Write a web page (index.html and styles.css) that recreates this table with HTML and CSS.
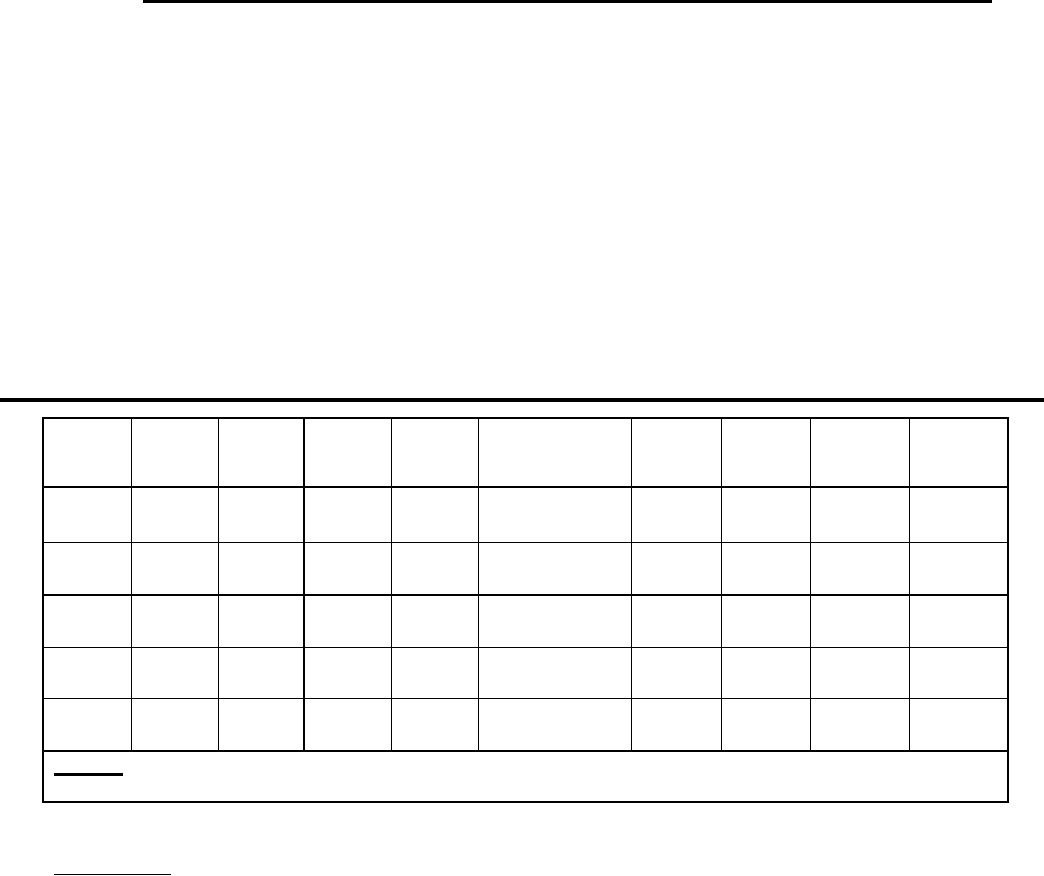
FILE: index.html
```html
<!DOCTYPE html>
<html lang="en">
<head>
<meta charset="utf-8">
<title>Document</title>
<link rel="stylesheet" href="styles.css">
</head>
<body>
<div class="page">
  <div class="top-rule"></div>
  <div class="section-rule"></div>
  <div class="grid-table">
    <div class="cell hdr"></div><div class="cell hdr"></div><div class="cell hdr thick-r"></div><div class="cell hdr"></div><div class="cell hdr"></div><div class="cell hdr"></div><div class="cell hdr"></div><div class="cell hdr"></div><div class="cell hdr"></div><div class="cell hdr thick-r"></div>
    <div class="cell"></div><div class="cell"></div><div class="cell thick-r"></div><div class="cell"></div><div class="cell"></div><div class="cell"></div><div class="cell"></div><div class="cell"></div><div class="cell"></div><div class="cell thick-r"></div>
    <div class="cell thick-b"></div><div class="cell thick-b"></div><div class="cell thick-b thick-r"></div><div class="cell thick-b"></div><div class="cell thick-b"></div><div class="cell thick-b"></div><div class="cell thick-b"></div><div class="cell thick-b"></div><div class="cell thick-b"></div><div class="cell thick-b thick-r"></div>
    <div class="cell"></div><div class="cell"></div><div class="cell thick-r"></div><div class="cell"></div><div class="cell"></div><div class="cell"></div><div class="cell"></div><div class="cell"></div><div class="cell"></div><div class="cell thick-r"></div>
    <div class="cell"></div><div class="cell"></div><div class="cell thick-r"></div><div class="cell"></div><div class="cell"></div><div class="cell"></div><div class="cell"></div><div class="cell"></div><div class="cell"></div><div class="cell thick-r"></div>
    <div class="cell thick-b"></div><div class="cell thick-b"></div><div class="cell thick-b thick-r"></div><div class="cell thick-b"></div><div class="cell thick-b"></div><div class="cell thick-b"></div><div class="cell thick-b"></div><div class="cell thick-b"></div><div class="cell thick-b"></div><div class="cell thick-b thick-r"></div>
    <div class="cell footer"><span class="note-mark"></span></div>
  </div>
  <div class="footnote-rule"></div>
</div>
</body>
</html>
```

FILE: styles.css
```css
html, body {
  margin: 0;
  padding: 0;
  background: #ffffff;
  font-family: "Liberation Sans", Arial, sans-serif;
}

.page {
  width: 1044px;
  height: 876px;
  overflow: hidden;
}

.top-rule {
  margin-left: 143px;
  width: 849px;
  height: 3px;
  background: #000;
}

.section-rule {
  margin-top: 395px;
  width: 1044px;
  height: 4px;
  background: #000;
}

.grid-table {
  margin-top: 15px;
  margin-left: 42px;
  width: 967px;
  box-sizing: border-box;
  border-top: 2px solid #000;
  border-left: 2px solid #000;
  display: grid;
  grid-template-columns: 88px 87px 86px 87px 87px 153px 90px 89px 99px 99px;
  grid-template-rows: 69px 55px 53px 52px 51px 53px 51px;
}

.cell {
  box-sizing: border-box;
  border-right: 1px solid #000;
  border-bottom: 1px solid #000;
}

.hdr {
  border-bottom-width: 2px;
}

.thick-r {
  border-right-width: 2px;
}

.thick-b {
  border-bottom-width: 2px;
}

.footer {
  grid-column: 1 / -1;
  border-right-width: 2px;
  border-bottom-width: 2px;
  padding: 21px 0 0 10px;
}

.note-mark {
  display: block;
  width: 69px;
  height: 3px;
  background: #000;
}

.footnote-rule {
  margin-top: 71px;
  margin-left: 54px;
  width: 117px;
  height: 1px;
  background: #000;
}
```
